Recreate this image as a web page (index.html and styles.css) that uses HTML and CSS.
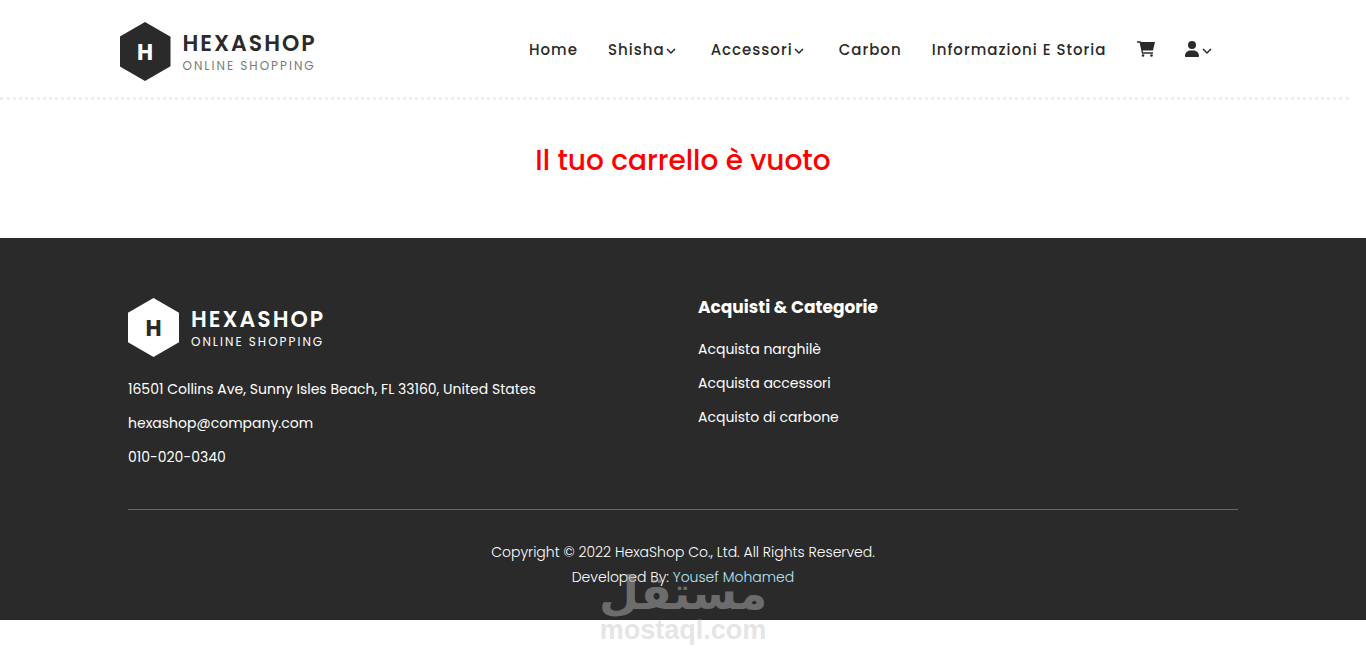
FILE: index.html
```html
<!DOCTYPE html>
<html lang="it">
<head>
<meta charset="utf-8">
<meta name="viewport" content="width=device-width, initial-scale=1">
<title>Hexashop</title>
<link rel="stylesheet" href="styles.css">
</head>
<body>
<header class="header">
  <div class="container header-row">
    <a class="logo" href="#">
      <span class="logo-mark">H</span>
      <span class="logo-words"><span class="logo-name">HEXASHOP</span><span class="logo-tag">ONLINE SHOPPING</span></span>
    </a>
    <nav class="nav">
      <a href="#">Home</a>
      <a class="has-menu" href="#">Shisha<svg class="chevron" viewBox="0 0 12 8" aria-hidden="true"><path d="M2 2l4 4 4-4"/></svg></a>
      <a class="has-menu" href="#">Accessori<svg class="chevron" viewBox="0 0 12 8" aria-hidden="true"><path d="M2 2l4 4 4-4"/></svg></a>
      <a href="#">Carbon</a>
      <a href="#">Informazioni E Storia</a>
      <a href="#" aria-label="Carrello"><svg class="cart" viewBox="0 0 18 16" aria-hidden="true"><path d="M3 1h15l-2 8.500H5z"/><path class="cart-frame" d="M0 1h3.200l2.300 11H16"/><circle cx="6" cy="14.500" r="1.300"/><circle cx="14.500" cy="14.500" r="1.300"/></svg></a>
      <a class="has-menu" href="#" aria-label="Account"><svg class="user" viewBox="0 0 448 512" aria-hidden="true"><path d="M224 256a128 128 0 1 0 0-256 128 128 0 1 0 0 256zm-50 48C78 304 0 382 0 477c0 19 15 35 35 35h378c20 0 35-16 35-35 0-95-78-173-174-173z"/></svg><svg class="chevron" viewBox="0 0 12 8" aria-hidden="true"><path d="M2 2l4 4 4-4"/></svg></a>
    </nav>
  </div>
</header>
<main class="main">
  <h1 class="empty-title">Il tuo carrello è vuoto</h1>
</main>
<footer class="footer">
  <div class="container">
    <div class="footer-columns">
      <div>
        <a class="logo logo-light" href="#">
          <span class="logo-mark">H</span>
          <span class="logo-words"><span class="logo-name">HEXASHOP</span><span class="logo-tag">ONLINE SHOPPING</span></span>
        </a>
        <ul class="links">
          <li><a href="#">16501 Collins Ave, Sunny Isles Beach, FL 33160, United States</a></li>
          <li><a href="#">hexashop@company.com</a></li>
          <li><a href="#">010-020-0340</a></li>
        </ul>
      </div>
      <div>
        <h2 class="footer-title">Acquisti &amp; Categorie</h2>
        <ul class="links">
          <li><a href="#">Acquista narghilè</a></li>
          <li><a href="#">Acquista accessori</a></li>
          <li><a href="#">Acquisto di carbone</a></li>
        </ul>
      </div>
    </div>
    <div class="copyright">
      <p>Copyright © 2022 HexaShop Co., Ltd. All Rights Reserved.</p>
      <p>Developed By: <a class="author" href="#">Yousef Mohamed</a></p>
    </div>
  </div>
</footer>
<div class="watermark">
  <span class="watermark-name" lang="ar" dir="rtl">مستقل</span>
  <span class="watermark-site">mostaql.com</span>
</div>
</body>
</html>
```
FILE: styles.css
```css
* { box-sizing: border-box; margin: 0; padding: 0; }
body {
  position: relative;
  min-height: 100vh;
  background: #fff;
  color: #2a2a2a;
  font-family: Poppins, Inter, "Open Sans", sans-serif;
  font-size: 14px;
}
a { color: inherit; text-decoration: none; }
ul { list-style: none; }
.container { max-width: 1110px; margin: 0 auto; }

.header { margin-right: 17px; border-bottom: 3px dotted #eee; }
.header-row { display: flex; justify-content: space-between; padding: 22px 0 16px; }

.logo { display: flex; width: max-content; gap: 12px; }
.logo-mark {
  display: grid;
  place-items: center;
  width: 51px;
  height: 59px;
  padding-top: 2px;
  background: #2a2a2a;
  color: #fff;
  clip-path: polygon(50% 0, 100% 25%, 100% 75%, 50% 100%, 0 75%, 0 25%);
  font-size: 22px;
  font-weight: 700;
}
.logo-words { display: flex; flex-direction: column; padding-top: 8px; }
.logo-name { font-size: 22px; line-height: 27px; font-weight: 600; letter-spacing: 2px; }
.logo-tag { color: #7a7a7a; font-size: 12px; line-height: 18px; font-weight: 400; letter-spacing: 2px; }
.logo-light { color: #fff; }
.logo-light .logo-mark { background: #fff; color: #2a2a2a; }
.logo-light .logo-tag { color: #fff; }

.nav {
  display: flex;
  align-items: center;
  gap: 30px;
  height: 54px;
  padding-right: 13px;
  font-size: 15px;
  font-weight: 500;
  letter-spacing: 1px;
}
.nav a { display: flex; align-items: center; }
.nav .has-menu { padding-right: 4px; }
.chevron { width: 12px; height: 8px; margin-top: 3px; fill: none; stroke: #2a2a2a; stroke-width: 1.5; }
.cart { width: 18px; height: 16px; fill: #2a2a2a; }
.cart-frame { fill: none; stroke: #2a2a2a; stroke-width: 1.3; }
.user { width: 14px; height: 16px; margin-right: 2px; fill: #2a2a2a; }

.main { padding: 41px 0 57px; }
.empty-title { color: #f00; font-size: 28px; line-height: 40px; font-weight: 500; text-align: center; }

.footer { background: #2a2a2a; color: #fff; padding: 60px 0 30px; }
.footer-columns { display: grid; grid-template-columns: 1fr 1fr; column-gap: 30px; padding-bottom: 40px; }
.links { display: grid; row-gap: 10px; line-height: 24px; }
.logo-light + .links { margin-top: 20px; }
.footer-title { margin-bottom: 20px; font-size: 17px; line-height: 19px; font-weight: 700; }
.copyright { border-top: 1px solid #696969; padding-top: 30px; line-height: 25px; font-weight: 300; text-align: center; }
.author { color: #b8e6f8; }

.watermark {
  position: absolute;
  top: 568px;
  left: 50%;
  display: flex;
  flex-direction: column;
  align-items: center;
  transform: translateX(-50%);
  color: #999;
  pointer-events: none;
}
.watermark-name { font: 700 46px/50px "DejaVu Sans", sans-serif; opacity: .6; }
.watermark-site { font: 700 27px/24px "Liberation Sans", sans-serif; opacity: .25; }
```
